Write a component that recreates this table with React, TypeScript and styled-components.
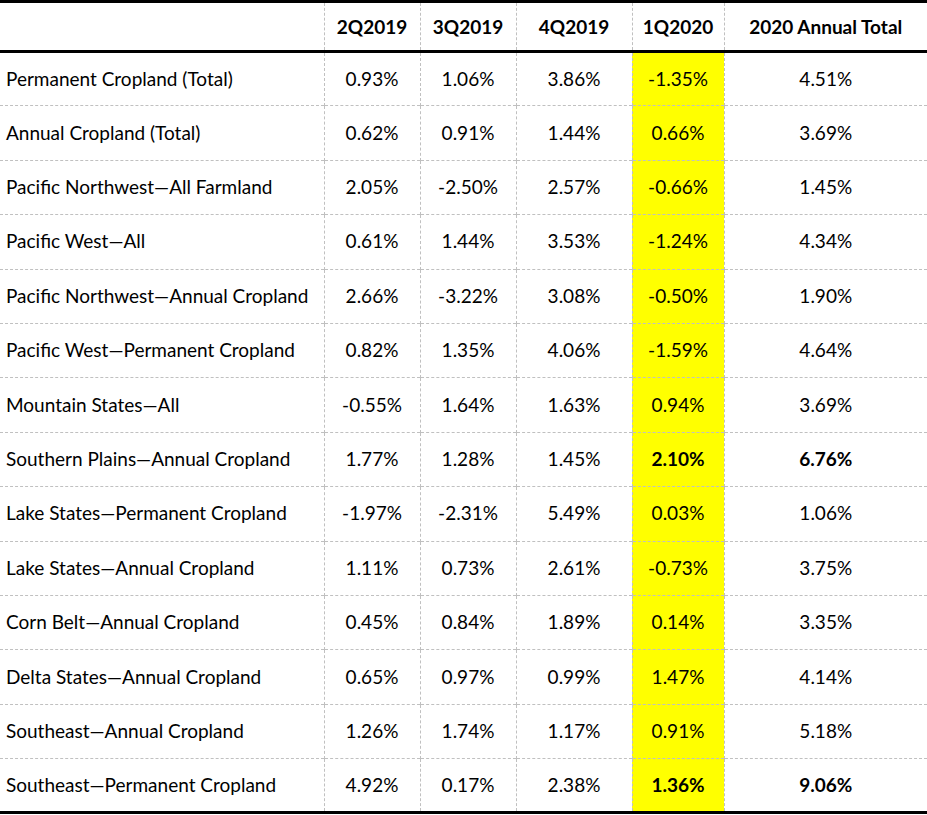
import styled, { createGlobalStyle } from 'styled-components';

const GlobalStyle = createGlobalStyle`
  html, body {
    margin: 0;
    padding: 0;
    background: #ffffff;
  }
  body {
    font-family: Lato, "Open Sans", "Liberation Sans", sans-serif;
    color: #000000;
  }
`;

interface Row {
  label: string;
  values: string[];
  bold?: boolean;
}

const columns = ['2Q2019', '3Q2019', '4Q2019', '1Q2020', '2020 Annual Total'];
const widths = [324, 96, 96, 116, 92, 203];

const rows: Row[] = [
  { label: 'Permanent Cropland (Total)', values: ['0.93%', '1.06%', '3.86%', '-1.35%', '4.51%'] },
  { label: 'Annual Cropland (Total)', values: ['0.62%', '0.91%', '1.44%', '0.66%', '3.69%'] },
  { label: 'Pacific Northwest—All Farmland', values: ['2.05%', '-2.50%', '2.57%', '-0.66%', '1.45%'] },
  { label: 'Pacific West—All', values: ['0.61%', '1.44%', '3.53%', '-1.24%', '4.34%'] },
  { label: 'Pacific Northwest—Annual Cropland', values: ['2.66%', '-3.22%', '3.08%', '-0.50%', '1.90%'] },
  { label: 'Pacific West—Permanent Cropland', values: ['0.82%', '1.35%', '4.06%', '-1.59%', '4.64%'] },
  { label: 'Mountain States—All', values: ['-0.55%', '1.64%', '1.63%', '0.94%', '3.69%'] },
  { label: 'Southern Plains—Annual Cropland', values: ['1.77%', '1.28%', '1.45%', '2.10%', '6.76%'], bold: true },
  { label: 'Lake States—Permanent Cropland', values: ['-1.97%', '-2.31%', '5.49%', '0.03%', '1.06%'] },
  { label: 'Lake States—Annual Cropland', values: ['1.11%', '0.73%', '2.61%', '-0.73%', '3.75%'] },
  { label: 'Corn Belt—Annual Cropland', values: ['0.45%', '0.84%', '1.89%', '0.14%', '3.35%'] },
  { label: 'Delta States—Annual Cropland', values: ['0.65%', '0.97%', '0.99%', '1.47%', '4.14%'] },
  { label: 'Southeast—Annual Cropland', values: ['1.26%', '1.74%', '1.17%', '0.91%', '5.18%'] },
  { label: 'Southeast—Permanent Cropland', values: ['4.92%', '0.17%', '2.38%', '1.36%', '9.06%'], bold: true },
];

const HIGHLIGHT = 3;

export default function App() {
  return (
    <>
      <GlobalStyle />
      <Table>
        <colgroup>
          {widths.map((w, i) => (
            <col key={i} style={{ width: w }} />
          ))}
        </colgroup>
        <thead>
          <HeadRow>
            <HeadCell />
            {columns.map((c) => (
              <HeadCell key={c}>{c}</HeadCell>
            ))}
          </HeadRow>
        </thead>
        <tbody>
          {rows.map((row) => (
            <BodyRow key={row.label}>
              <LabelCell>{row.label}</LabelCell>
              {row.values.map((v, i) => (
                <ValueCell
                  key={i}
                  $highlight={i === HIGHLIGHT}
                  $bold={!!row.bold && i >= HIGHLIGHT}
                >
                  {v}
                </ValueCell>
              ))}
            </BodyRow>
          ))}
        </tbody>
      </Table>
    </>
  );
}

const Table = styled.table`
  width: 927px;
  table-layout: fixed;
  border-collapse: collapse;
  border-top: 3px solid #000;
  border-bottom: 3px solid #000;
  font-size: 19px;
  line-height: 1.2;
`;

const HeadRow = styled.tr`
  height: 50px;
  border-bottom: 3px solid #000;
`;

const HeadCell = styled.th`
  padding: 2px 0 0;
  font-weight: 700;
  text-align: center;
  vertical-align: middle;
  border-left: 1px dashed #c0c0c0;

  &:first-child {
    border-left: none;
  }
`;

const BodyRow = styled.tr`
  height: 54.4px;
  border-top: 1px dashed #c0c0c0;

  &:first-child {
    border-top: none;
  }
`;

const LabelCell = styled.td`
  padding: 0 0 0 6px;
  text-align: left;
  vertical-align: middle;
  white-space: nowrap;
`;

const ValueCell = styled.td<{ $highlight: boolean; $bold: boolean }>`
  padding: 0;
  text-align: center;
  vertical-align: middle;
  border-left: 1px dashed #c0c0c0;
  background: ${(p) => (p.$highlight ? '#ffff00' : 'transparent')};
  font-weight: ${(p) => (p.$bold ? 700 : 400)};
`;
